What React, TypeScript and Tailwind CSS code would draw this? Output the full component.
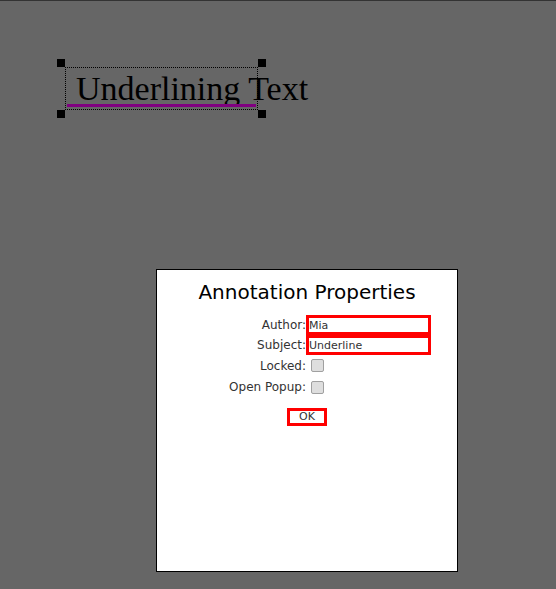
import React from "react";

const sans = "font-['DejaVu_Sans',sans-serif]";

function Handle({ className }: { className: string }) {
  return <div className={`absolute h-[8px] w-[8px] bg-black ${className}`} />;
}

function Row({ label, children }: { label: string; children: React.ReactNode }) {
  return (
    <>
      <div className="flex items-center justify-end text-[12px] text-[#333]">{label}</div>
      <div className="flex items-center">{children}</div>
    </>
  );
}

function Checkbox() {
  return <span className="ml-[5px] h-[13px] w-[13px] rounded-[2px] border border-[#a0a0a0] bg-[#dedede]" />;
}

export default function App() {
  return (
    <div className="relative h-[589px] w-full overflow-hidden border-t border-[#333] bg-[#666]">
      {/* selected underline annotation on the page */}
      <div className="absolute left-[65px] top-[66px] h-[43px] w-[193px] border border-dotted border-black">
        <Handle className="-left-[9px] -top-[9px]" />
        <Handle className="-right-[9px] -top-[9px]" />
        <Handle className="-left-[9px] -bottom-[9px]" />
        <Handle className="-right-[9px] -bottom-[9px]" />
        <div className="whitespace-nowrap pl-[10px] pt-[4px] font-['Liberation_Serif',serif] text-[34px] leading-[34px] text-black">
          Underlining Text
        </div>
        <div className="absolute left-[1px] right-[1px] top-[36px] h-[3px] bg-[#800080]" />
      </div>

      {/* properties dialog */}
      <div className={`absolute left-[156px] top-[268px] flex h-[303px] w-[302px] flex-col border border-black bg-white ${sans}`}>
        <div className="mt-[8px] h-[28px] text-center text-[20px] leading-[28px] text-black">
          Annotation Properties
        </div>
        <div className="mt-[9px] grid grid-cols-[149px_1fr] grid-rows-[20px_20px_21px_22px]">
          <Row label="Author:">
            <input
              defaultValue="Mia"
              className="h-[20px] w-[125px] border-[3px] border-[#f00] px-0 text-[11px] text-[#333] outline-none"
            />
          </Row>
          <Row label="Subject:">
            <input
              defaultValue="Underline"
              className="h-[20px] w-[125px] border-[3px] border-[#f00] px-0 text-[11px] text-[#333] outline-none"
            />
          </Row>
          <Row label="Locked:">
            <Checkbox />
          </Row>
          <Row label="Open Popup:">
            <Checkbox />
          </Row>
        </div>
        <div className="mt-[10px] flex justify-center">
          <button className="h-[18px] w-[40px] border-[3px] border-[#f00] bg-white text-[11px] leading-[12px] text-[#333]">
            OK
          </button>
        </div>
      </div>
    </div>
  );
}
